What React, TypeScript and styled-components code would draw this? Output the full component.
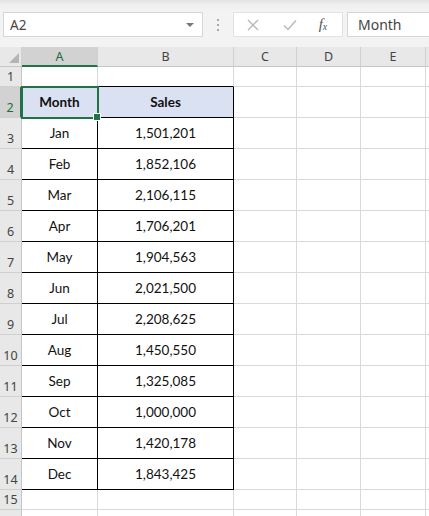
import React from "react";
import styled, { createGlobalStyle, css } from "styled-components";

const GlobalStyle = createGlobalStyle`
  html, body {
    margin: 0;
    padding: 0;
    background: #ffffff;
    overflow: hidden;
  }
`;

const columns = [
  { name: "A", width: 76 },
  { name: "B", width: 136 },
  { name: "C", width: 63 },
  { name: "D", width: 64 },
  { name: "E", width: 65 },
  { name: "", width: 60 },
];

const sales: [string, string][] = [
  ["Jan", "1,501,201"],
  ["Feb", "1,852,106"],
  ["Mar", "2,106,115"],
  ["Apr", "1,706,201"],
  ["May", "1,904,563"],
  ["Jun", "2,021,500"],
  ["Jul", "2,208,625"],
  ["Aug", "1,450,550"],
  ["Sep", "1,325,085"],
  ["Oct", "1,000,000"],
  ["Nov", "1,420,178"],
  ["Dec", "1,843,425"],
];

const gridTemplate = `22px ${columns.map((c) => c.width + "px").join(" ")}`;

type SheetRow = { num: number; label: string; height: number; cells: string[]; header?: boolean };

function App() {
  const rows: SheetRow[] = [];
  rows.push({ num: 1, label: "1", height: 20, cells: [] });
  rows.push({ num: 2, label: "2", height: 31, cells: ["Month", "Sales"], header: true });
  sales.forEach(([m, v], i) => rows.push({ num: i + 3, label: String(i + 3), height: 31, cells: [m, v] }));
  rows.push({ num: 15, label: "15", height: 20, cells: [] });
  // only the top edge of row 16 is in view, its number sits below the fold
  rows.push({ num: 16, label: "", height: 20, cells: [] });

  return (
    <>
      <GlobalStyle />
      <Window>
        <Toolbar>
          <NameBox>
            <NameText>A2</NameText>
            <Caret />
          </NameBox>
          <Grip>
            <Dot />
            <Dot />
            <Dot />
          </Grip>
          <FormulaButtons>
            <ToolIcon>
              <svg width="12" height="12" viewBox="0 0 12 12">
                <path d="M1 1 L11 11 M11 1 L1 11" stroke="#b9b9b9" strokeWidth="1.4" fill="none" />
              </svg>
            </ToolIcon>
            <ToolIcon>
              <svg width="14" height="12" viewBox="0 0 14 12">
                <path d="M1 6.5 L5 10.5 L13 1.5" stroke="#b9b9b9" strokeWidth="1.4" fill="none" />
              </svg>
            </ToolIcon>
            <FxIcon>
              f<sub>x</sub>
            </FxIcon>
          </FormulaButtons>
          <FormulaInput>Month</FormulaInput>
        </Toolbar>

        <Sheet>
          <HeaderRow>
            <Corner>
              <svg width="10" height="10" viewBox="0 0 10 10">
                <path d="M10 0 L10 10 L0 10 Z" fill="#b4b4b4" />
              </svg>
            </Corner>
            {columns.map((c) => (
              <ColHeader key={c.name || "x"} selected={c.name === "A"}>
                {c.name}
              </ColHeader>
            ))}
          </HeaderRow>

          {rows.map((r) => (
            <Row key={r.num} height={r.height}>
              <RowHeader selected={r.num === 2}>{r.label}</RowHeader>
              {columns.map((c, ci) => {
                const inTable = ci < 2 && r.num >= 2 && r.num <= 14;
                const aboveTable = ci < 2 && r.num === 1;
                return (
                  <Cell
                    key={ci}
                    inTable={inTable}
                    aboveTable={aboveTable}
                    header={r.header && inTable}
                    active={r.num === 2 && ci === 0}
                  >
                    {r.cells[ci] || ""}
                  </Cell>
                );
              })}
            </Row>
          ))}
        </Sheet>
      </Window>
    </>
  );
}

const Window = styled.div`
  width: 429px;
  height: 516px;
  overflow: hidden;
  background: #ffffff;
`;

const Toolbar = styled.div`
  height: 47px;
  box-sizing: border-box;
  padding: 12px 0 0 3px;
  display: flex;
  align-items: flex-start;
  background: linear-gradient(#e2e2e2 0px, #f0f0f0 5px, #f3f3f3 12px);
  font-family: "Noto Sans", "Open Sans", sans-serif;
  & > * {
    flex-shrink: 0;
  }
`;

const NameBox = styled.div`
  width: 200px;
  height: 25px;
  box-sizing: border-box;
  border: 1px solid #d6d6d6;
  background: #ffffff;
  display: flex;
  align-items: center;
  justify-content: space-between;
  padding: 0 6px 0 6px;
`;

const NameText = styled.span`
  font-size: 13.5px;
  color: #444444;
`;

const Caret = styled.span`
  width: 0;
  height: 0;
  border-left: 4px solid transparent;
  border-right: 4px solid transparent;
  border-top: 4px solid #777777;
  margin-right: 2px;
`;

const Grip = styled.div`
  width: 30px;
  height: 25px;
  display: flex;
  flex-direction: column;
  align-items: center;
  justify-content: center;
  gap: 3px;
`;

const Dot = styled.span`
  width: 2px;
  height: 2px;
  background: #a8a8a8;
`;

const FormulaButtons = styled.div`
  width: 110px;
  height: 25px;
  box-sizing: border-box;
  border: 1px solid #e2e2e2;
  background: #ffffff;
  display: grid;
  grid-template-columns: 38px 36px 1fr;
  align-items: center;
  justify-items: center;
  padding: 0 4px 0 0;
`;

const ToolIcon = styled.span`
  display: flex;
  align-items: center;
  justify-content: center;
`;

const FxIcon = styled.span`
  font-family: "Liberation Serif", "DejaVu Serif", serif;
  font-style: italic;
  font-size: 15px;
  color: #555555;
  sub {
    font-size: 10px;
    vertical-align: -1px;
  }
`;

const FormulaInput = styled.div`
  margin-left: 4px;
  width: 120px;
  height: 25px;
  box-sizing: border-box;
  border: 1px solid #d6d6d6;
  border-right: none;
  background: #ffffff;
  display: flex;
  align-items: center;
  padding-left: 10px;
  font-size: 14px;
  color: #444444;
`;

const Sheet = styled.div`
  display: flex;
  flex-direction: column;
`;

const HeaderRow = styled.div`
  display: grid;
  grid-template-columns: ${gridTemplate};
  height: 20px;
`;

const headerBase = css`
  box-sizing: border-box;
  background: #e8e8e8;
  font-family: "Noto Sans", "Open Sans", sans-serif;
  font-size: 12.5px;
  color: #444444;
`;

const Corner = styled.div`
  ${headerBase};
  border-right: 1px solid #d0d0d0;
  border-bottom: 1px solid #c6c6c6;
  display: flex;
  align-items: flex-end;
  justify-content: flex-end;
  padding: 0 2px 3px 0;
`;

const ColHeader = styled.div<{ selected?: boolean }>`
  ${headerBase};
  display: flex;
  align-items: center;
  justify-content: center;
  border-right: 1px solid #d0d0d0;
  border-bottom: 1px solid #c6c6c6;
  ${(p) =>
    p.selected &&
    css`
      background: #d2d2d2;
      color: #1e6b41;
      border-bottom: 2px solid #217346;
    `}
`;

const Row = styled.div<{ height: number }>`
  display: grid;
  grid-template-columns: ${gridTemplate};
  height: ${(p) => p.height}px;
`;

const RowHeader = styled.div<{ selected?: boolean }>`
  ${headerBase};
  display: flex;
  align-items: flex-end;
  justify-content: center;
  padding-bottom: 1px;
  border-right: 1px solid #c6c6c6;
  border-bottom: 1px solid #d0d0d0;
  ${(p) =>
    p.selected &&
    css`
      background: #d2d2d2;
      color: #1e6b41;
      border-right: 2px solid #217346;
    `}
`;

const Cell = styled.div<{
  inTable?: boolean;
  aboveTable?: boolean;
  header?: boolean;
  active?: boolean;
}>`
  position: relative;
  box-sizing: border-box;
  display: flex;
  align-items: center;
  justify-content: center;
  font-family: Lato, "Open Sans", sans-serif;
  font-size: 13.5px;
  color: #111111;
  border-right: 1px solid #d9d9d9;
  border-bottom: 1px solid #d9d9d9;
  ${(p) =>
    p.aboveTable &&
    css`
      border-bottom: 1px solid #000000;
    `}
  ${(p) =>
    p.inTable &&
    css`
      border-right: 1px solid #000000;
      border-bottom: 1px solid #000000;
    `}
  ${(p) =>
    p.header &&
    css`
      background: #d9e1f2;
      font-weight: 700;
    `}
  ${(p) =>
    p.active &&
    css`
      outline: 2px solid #217346;
      outline-offset: -1px;
      z-index: 1;
      &::after {
        content: "";
        position: absolute;
        right: -4px;
        bottom: -4px;
        width: 6px;
        height: 6px;
        background: #217346;
        border: 1px solid #ffffff;
      }
    `}
`;

export default App;
